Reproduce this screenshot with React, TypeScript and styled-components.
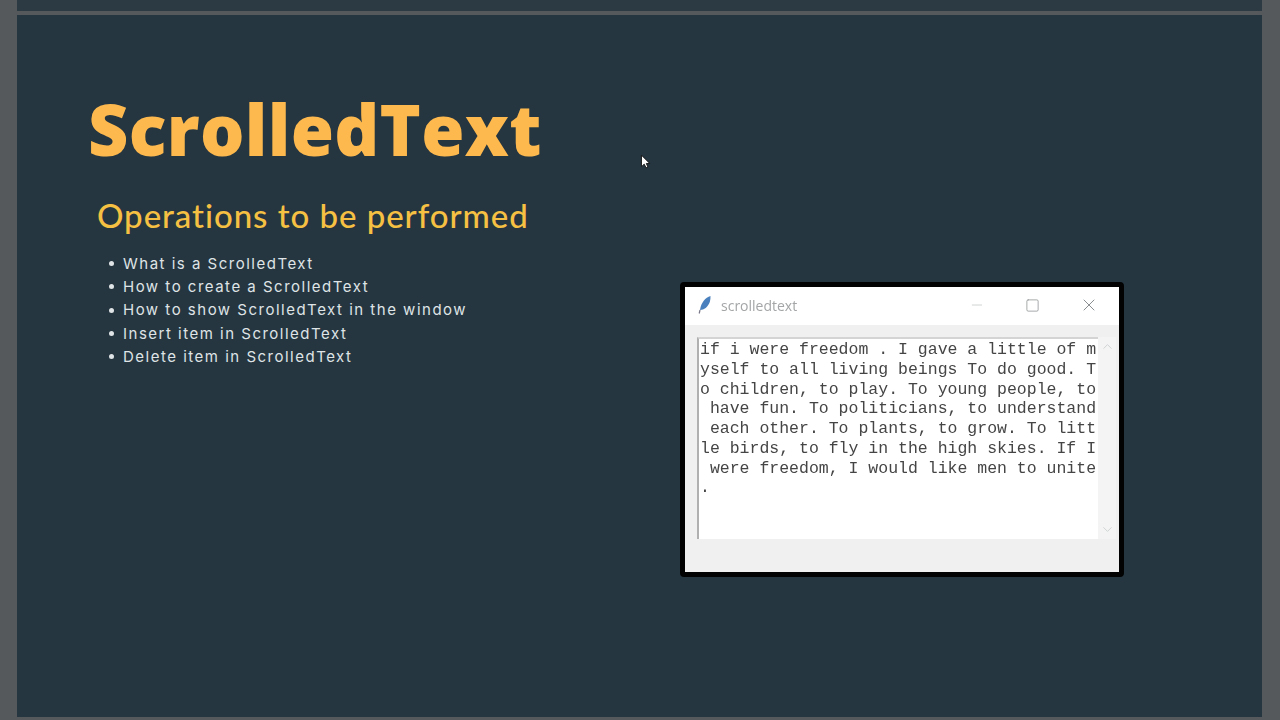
import styled, { createGlobalStyle } from 'styled-components';
import { ChevronDown, ChevronUp, Minus, Square, X } from 'lucide-react';

const lines = [
  'if i were freedom . I gave a little of m',
  'yself to all living beings To do good. T',
  'o children, to play. To young people, to',
  ' have fun. To politicians, to understand',
  ' each other. To plants, to grow. To litt',
  'le birds, to fly in the high skies. If I',
  ' were freedom, I would like men to unite',
  '.',
];

const operations = [
  'What is a ScrolledText',
  'How to create a ScrolledText',
  'How to show ScrolledText in the window',
  'Insert item in ScrolledText',
  'Delete item in ScrolledText',
];

const App = () => {
  return (
    <Screen>
      <GlobalStyle />
      <PreviousSlide />
      <Slide>
        <LeftColumn>
          <Title>ScrolledText</Title>
          <Subtitle>Operations to be performed</Subtitle>
          <OperationList>
            {operations.map((item) => (
              <OperationItem key={item}>{item}</OperationItem>
            ))}
          </OperationList>
        </LeftColumn>
        <AppWindow>
          <TitleBar>
            <FeatherIcon width="14" height="20" viewBox="0 0 14 20">
              <path d="M12.5 1C7.5 2.5 3 7.5 2 15c4 0 8-3 9.800-8 .6-2 .7-4 .7-6z" fill="#4a80bd" />
              <path d="M2 15l-.8 3.500" stroke="#778" strokeWidth="1.2" />
            </FeatherIcon>
            <WindowName>scrolledtext</WindowName>
            <WindowControls>
              <Minus size={16} strokeWidth={1.2} />
              <Square size={15} strokeWidth={1.2} />
              <X size={20} strokeWidth={1.2} />
            </WindowControls>
          </TitleBar>
          <WindowBody>
            <TextArea>
              {lines.map((line, i) => (
                <TextLine key={i}>{line}</TextLine>
              ))}
            </TextArea>
            <ScrollBar>
              <ChevronUp size={15} strokeWidth={1.5} />
              <ChevronDown size={15} strokeWidth={1.5} />
            </ScrollBar>
          </WindowBody>
        </AppWindow>
        <Pointer width="11" height="15" viewBox="0 0 9 13">
          <path d="M1 1v10l2.400-2.200L5 12l1.600-.7L5.200 8.200H8.200z" fill="#fff" stroke="#111" strokeWidth="0.8" />
        </Pointer>
      </Slide>
    </Screen>
  );
};

const GlobalStyle = createGlobalStyle`
  html, body {
    margin: 0;
    padding: 0;
    background: #55595b;
  }
`;

const Screen = styled.div`
  width: 1280px;
  height: 720px;
  overflow: hidden;
  padding: 0 18px 3px 17px;
  box-sizing: border-box;
  display: flex;
  flex-direction: column;
  background: #55595b;
`;

const PreviousSlide = styled.div`
  height: 11px;
  flex: none;
  margin-bottom: 4px;
  background: #2c3b43;
`;

const Slide = styled.div`
  flex: 1;
  position: relative;
  display: flex;
  justify-content: space-between;
  align-items: flex-start;
  padding-right: 138px;
  background: #263641;
`;

const LeftColumn = styled.div`
  display: flex;
  flex-direction: column;
  padding: 72px 0 0 71px;
`;

const Title = styled.h1`
  margin: 0;
  font-family: 'Open Sans', sans-serif;
  font-weight: 800;
  font-size: 70px;
  line-height: 84px;
  letter-spacing: 0.3px;
  color: #fdb94e;
`;

const Subtitle = styled.h2`
  margin: 24px 0 0 9px;
  font-family: 'Lato', sans-serif;
  font-weight: 500;
  font-size: 33px;
  line-height: 40px;
  letter-spacing: 0.95px;
  color: #f6c143;
`;

const OperationList = styled.ul`
  margin: 16.500px 0 0 0;
  padding: 0 0 0 20.500px;
  list-style: none;
  font-family: 'Inter', sans-serif;
  font-size: 15px;
  line-height: 23.400px;
  letter-spacing: 1.5px;
  color: #dfe4e6;
`;

const OperationItem = styled.li`
  display: flex;
  align-items: center;
  gap: 9.500px;
  &::before {
    content: '';
    width: 5px;
    height: 5px;
    border-radius: 50%;
    background: #dfe4e6;
  }
`;

const AppWindow = styled.div`
  margin-top: 267px;
  width: 444px;
  height: 295px;
  box-sizing: border-box;
  display: flex;
  flex-direction: column;
  border: 5px solid #020202;
  border-radius: 4px;
  background: #f0f0f0;
`;

const TitleBar = styled.div`
  height: 38px;
  flex: none;
  box-sizing: border-box;
  display: flex;
  align-items: center;
  padding: 0 20px 2px 13px;
  background: #ffffff;
`;

const FeatherIcon = styled.svg`
  filter: blur(0.4px);
`;

const WindowName = styled.span`
  margin-left: 9px;
  font-family: 'Open Sans', sans-serif;
  font-size: 14px;
  color: #a3a5a6;
  filter: blur(0.5px);
`;

const WindowControls = styled.div`
  margin-left: auto;
  display: flex;
  align-items: center;
  gap: 39.500px;
  color: #8a8d8f;
  svg:first-child {
    color: #c4c6c7;
  }
`;

const WindowBody = styled.div`
  display: flex;
  align-items: flex-start;
  padding: 12px 0 0 12px;
`;

const TextArea = styled.div`
  width: 401px;
  height: 202px;
  box-sizing: border-box;
  padding: 1px 0 0 1px;
  overflow: hidden;
  border-top: 2px solid #d4d4d4;
  border-left: 2px solid #b0b0b0;
  background: #ffffff;
`;

const TextLine = styled.div`
  height: 19.750px;
  font-family: 'Liberation Mono', monospace;
  font-size: 16.500px;
  line-height: 19.750px;
  white-space: pre;
  color: #454545;
  filter: blur(0.5px);
`;

const ScrollBar = styled.div`
  width: 18px;
  height: 202px;
  box-sizing: border-box;
  padding: 2px 0;
  display: flex;
  flex-direction: column;
  align-items: center;
  justify-content: space-between;
  color: #cdd0d1;
  background: #f4f4f4;
`;

const Pointer = styled.svg`
  position: absolute;
  left: 623px;
  top: 139px;
`;

export default App;
